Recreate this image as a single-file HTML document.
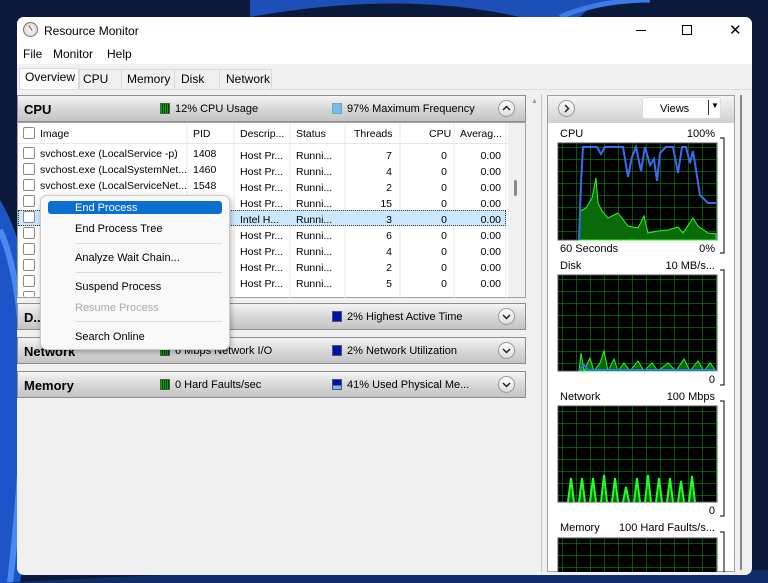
<!DOCTYPE html><html><head><style>
*{margin:0;padding:0;box-sizing:border-box}
body{width:768px;height:583px;overflow:hidden;position:relative;font-family:"Liberation Sans",sans-serif;font-size:11px;color:#000;background:#0b1a3a}
.a{position:absolute;white-space:nowrap}
.t{font-size:10.5px}
.win{left:17px;top:17px;width:735px;height:558px;background:#f0f0f0;border-radius:7px;overflow:hidden}
.hdr{position:absolute;left:17px;width:509px;height:27px;background:linear-gradient(#f4f4f4,#d8d8d8 50%,#c4c4c4);border:1px solid #8e8e8e}
.hdr b{position:absolute;left:6px;top:6px;font-size:13px}
.circ{position:absolute;width:17px;height:17px;border-radius:50%;border:1px solid #999;background:linear-gradient(#fff,#ddd)}
.sq{display:inline-block;width:10px;height:11px;vertical-align:-2px;margin-right:5px;border:1px solid #555}
.g{background:repeating-linear-gradient(90deg,#0a0 0 1px,#040 1px 2px)}
.bl{background:#0010b0}
.cb{position:absolute;left:23px;width:12px;height:12px;border:1px solid #888;border-radius:2px;background:#fff}
.row{position:absolute;left:18px;width:488px;height:16px}
.r{text-align:right}
.mi{position:absolute;left:75px}
.sep{position:absolute;left:76px;width:146px;height:1px;background:#ddd}
</style></head><body>
<svg class="a" style="left:0;top:0" width="768" height="583"><path d="M0 200 Q60 300 20 583 L0 583Z" fill="#1d55c9"/><path d="M0 230 Q40 320 10 583" stroke="#4a8af0" stroke-width="6" fill="none"/><path d="M250 17 Q400 -10 520 17 L580 17 Q600 -5 640 0 L250 0Z" fill="#1c4fb8"/><path d="M560 17 Q600 0 650 0" stroke="#3c7ce8" stroke-width="5" fill="none"/><path d="M0 583 L768 583 L768 570 Q400 560 0 583Z" fill="#102d6a"/></svg>
<div class="a win">
<div class="a" style="left:0;top:0;width:735px;height:46px;background:#fff"></div>
</div>
<div class="a" style="left:23px;top:22px;width:15px;height:15px;border-radius:50%;border:1px solid #777;background:radial-gradient(#fff,#ccc)"></div>
<div class="a" style="left:30px;top:25px;width:1px;height:6px;background:#c33;transform:rotate(-35deg)"></div>
<div class="a" style="left:44px;top:24px;font-size:12px">Resource Monitor</div>
<div class="a" style="left:636px;top:30px;width:10px;height:1px;background:#000"></div>
<div class="a" style="left:682px;top:25px;width:10px;height:10px;border:1px solid #000"></div>
<div class="a" style="left:729px;top:21px;font-size:15px">✕</div>
<div class="a" style="left:23px;top:47px;font-size:12px">File</div>
<div class="a" style="left:53px;top:47px;font-size:12px">Monitor</div>
<div class="a" style="left:107px;top:47px;font-size:12px">Help</div>
<div class="a" style="left:17px;top:63px;width:735px;height:1px;background:#fff"></div>
<div class="a" style="left:19px;top:68px;width:60px;height:21px;background:#fbfbfb;border:1px solid #d9d9d9;border-bottom:none"></div>
<div class="a" style="left:79px;top:69px;width:193px;height:20px;border:1px solid #d9d9d9;border-bottom:none"></div>
<div class="a" style="left:121px;top:69px;width:1px;height:20px;background:#d9d9d9"></div>
<div class="a" style="left:174px;top:69px;width:1px;height:20px;background:#d9d9d9"></div>
<div class="a" style="left:219px;top:69px;width:1px;height:20px;background:#d9d9d9"></div>
<div class="a" style="left:25px;top:70px;font-size:12px">Overview</div>
<div class="a" style="left:83px;top:72px;font-size:12px">CPU</div>
<div class="a" style="left:127px;top:72px;font-size:12px">Memory</div>
<div class="a" style="left:181px;top:72px;font-size:12px">Disk</div>
<div class="a" style="left:226px;top:72px;font-size:12px">Network</div>
<div class="a" style="left:17px;top:89px;width:735px;height:1px;background:#ddd"></div>
<!-- CPU section -->
<div class="hdr" style="top:95px"><b>CPU</b><span class="a" style="left:142px;top:7px"><i class="sq g"></i>12% CPU Usage</span><span class="a" style="left:314px;top:7px"><i class="sq" style="background:#7ab8f0;border-color:#6aa"></i>97% Maximum Frequency</span><div class="circ" style="left:480px;top:4px"><svg width="15" height="15"><path d="M4 9L7.5 5.5L11 9" stroke="#222" stroke-width="1.5" fill="none"/></svg></div></div>
<div class="a" style="left:17px;top:122px;width:509px;height:176px;background:#fff;border:1px solid #a0a0a0"></div>
<div class="a" style="left:18px;top:123px;width:490px;height:21px;border-bottom:1px solid #e5e5e5"></div>
<div class="cb" style="top:127px"></div>
<div class="a t" style="left:40px;top:128px">Image</div>
<div class="a t" style="left:193px;top:128px">PID</div>
<div class="a t" style="left:240px;top:128px">Descrip...</div>
<div class="a t" style="left:296px;top:128px">Status</div>
<div class="a t" style="left:354px;top:128px">Threads</div>
<div class="a t" style="left:429px;top:128px">CPU</div>
<div class="a t" style="left:460px;top:128px">Averag...</div>
<svg class="a" style="left:18px;top:123px" width="490" height="175"><g stroke="#e8e8e8"><path d="M169 0V175M216 0V175M272 0V175M327 0V175M382 0V175M436 0V175M488 0V175"/></g></svg>
<div class="a" style="left:508px;top:123px;width:17px;height:174px;background:#f0f0f0"></div>
<div class="a" style="left:514px;top:180px;width:3px;height:16px;background:#888;border-radius:2px"></div>
<div class="row" style="top:210px;background:#cce8ff;border:1px dotted #333"></div>
<div class="cb" style="top:147px"></div><div class="a t" style="left:40px;top:148px">svchost.exe (LocalService -p)</div><div class="a t" style="left:193px;top:148px">1408</div>
<div class="cb" style="top:163px"></div><div class="a t" style="left:40px;top:164px">svchost.exe (LocalSystemNet...</div><div class="a t" style="left:193px;top:164px">1460</div>
<div class="cb" style="top:179px"></div><div class="a t" style="left:40px;top:180px">svchost.exe (LocalServiceNet...</div><div class="a t" style="left:193px;top:180px">1548</div>
<div class="cb" style="top:195px"></div><div class="cb" style="top:211px"></div><div class="cb" style="top:227px"></div><div class="cb" style="top:243px"></div><div class="cb" style="top:259px"></div><div class="cb" style="top:275px"></div><div class="cb" style="top:291px;height:6px;border-bottom:none"></div>
<div class="a t" style="left:240px;top:148px;line-height:16px">Host Pr...<br>Host Pr...<br>Host Pr...<br>Host Pr...<br>Intel H...<br>Host Pr...<br>Host Pr...<br>Host Pr...<br>Host Pr...</div>
<div class="a t" style="left:296px;top:148px;line-height:16px">Runni...<br>Runni...<br>Runni...<br>Runni...<br>Runni...<br>Runni...<br>Runni...<br>Runni...<br>Runni...</div>
<div class="a r t" style="left:352px;top:148px;width:40px;line-height:16px">7<br>4<br>2<br>15<br>3<br>6<br>4<br>2<br>5</div>
<div class="a r t" style="left:407px;top:148px;width:40px;line-height:16px">0<br>0<br>0<br>0<br>0<br>0<br>0<br>0<br>0</div>
<div class="a r t" style="left:461px;top:148px;width:40px;line-height:16px">0.00<br>0.00<br>0.00<br>0.00<br>0.00<br>0.00<br>0.00<br>0.00<br>0.00</div>
<!-- other headers -->
<div class="hdr" style="top:303px"><b>D...</b><span class="a" style="left:142px;top:7px"><i class="sq g"></i>Disk I/O</span><span class="a" style="left:314px;top:7px"><i class="sq bl"></i>2% Highest Active Time</span><div class="circ" style="left:480px;top:4px"><svg width="15" height="15"><path d="M4 6L7.5 9.5L11 6" stroke="#222" stroke-width="1.5" fill="none"/></svg></div></div>
<div class="hdr" style="top:337px"><b>Network</b><span class="a" style="left:142px;top:7px"><i class="sq g"></i>6 Mbps Network I/O</span><span class="a" style="left:314px;top:7px"><i class="sq bl"></i>2% Network Utilization</span><div class="circ" style="left:480px;top:4px"><svg width="15" height="15"><path d="M4 6L7.5 9.5L11 6" stroke="#222" stroke-width="1.5" fill="none"/></svg></div></div>
<div class="hdr" style="top:371px"><b>Memory</b><span class="a" style="left:142px;top:7px"><i class="sq g"></i>0 Hard Faults/sec</span><span class="a" style="left:314px;top:7px"><i class="sq" style="background:linear-gradient(#0010b0 60%,#7ab8f0 60%)"></i>41% Used Physical Me...</span><div class="circ" style="left:480px;top:4px"><svg width="15" height="15"><path d="M4 6L7.5 9.5L11 6" stroke="#222" stroke-width="1.5" fill="none"/></svg></div></div>
<!-- context menu -->
<div class="a" style="left:40px;top:195px;width:190px;height:155px;background:#f9f9f9;border:1px solid #ccc;border-radius:7px;box-shadow:1px 2px 6px rgba(0,0,0,.3)"></div>
<div class="a" style="left:48px;top:201px;width:174px;height:13px;background:#0a6fd1;border-radius:3px"></div>
<div class="mi" style="top:202px;color:#fff">End Process</div>
<div class="mi" style="top:223px">End Process Tree</div>
<div class="sep" style="top:243px"></div>
<div class="mi" style="top:252px">Analyze Wait Chain...</div>
<div class="sep" style="top:272px"></div>
<div class="mi" style="top:281px">Suspend Process</div>
<div class="mi" style="top:302px;color:#aaa">Resume Process</div>
<div class="sep" style="top:321px"></div>
<div class="mi" style="top:331px">Search Online</div>
<!-- left scrollbar -->
<div class="a" style="left:541px;top:94px;width:1px;height:478px;background:#c8c8c8"></div>
<div class="a" style="left:531px;top:98px;font-size:7px;color:#999">▲</div>
<!-- right panel -->
<div class="a" style="left:547px;top:95px;width:188px;height:477px;background:#fff;border:1px solid #a0a0a0"></div>
<div class="a" style="left:548px;top:96px;width:186px;height:27px;background:linear-gradient(#f4f4f4,#d0d0d0)"></div>
<div class="circ" style="left:558px;top:100px"><svg width="15" height="15"><path d="M6 4L9.5 7.5L6 11" stroke="#222" stroke-width="1.5" fill="none"/></svg></div>
<div class="a" style="left:642px;top:97px;width:79px;height:22px;background:#fff;border:1px solid #ddd;border-radius:3px;padding:5px 0 0 17px">Views</div>
<div class="a" style="left:708px;top:100px;width:1px;height:15px;background:#333"></div>
<div class="a" style="left:711px;top:101px;font-size:8px">▼</div>
<div class="a" style="left:740px;top:95px;width:2px;height:475px;background:#888"></div>
<svg class="a" style="left:548px;top:123px" width="186" height="449">
<defs><pattern id="gr" width="14" height="12" patternUnits="userSpaceOnUse" x="0" y="0"><rect width="14" height="12" fill="#000"/><path d="M0 0H14M0 0V12" stroke="#0b8a0b" stroke-width="1.2"/></pattern></defs>
<g font-family="Liberation Sans" font-size="11">
<text x="12" y="14">CPU</text><text x="167" y="14" text-anchor="end">100%</text>
<rect x="10" y="20" width="159" height="97" fill="url(#gr)" stroke="#555"/>
<path d="M31 117 L32 88 L38 85 L44 75 L48 55 L50 80 L54 88 L60 95 L70 90 L80 103 L90 105 L96 93 L100 110 L110 108 L120 107 L130 104 L135 110 L145 95 L150 103 L160 110 L168 111 L168 117Z" fill="#0a6a0a" stroke="#2f2" stroke-width="1"/>
<path d="M31 117 L33 60 L35 24 L49 24 L53 31 L57 24 L75 24 L80 54 L84 34 L88 24 L93 48 L97 24 L102 42 L106 36 L109 58 L112 30 L118 24 L125 24 L130 50 L134 24 L138 24 L142 40 L145 28 L152 72 L160 80 L168 80" fill="none" stroke="#3a6cf0" stroke-width="2"/>
<text x="12" y="129">60 Seconds</text><text x="167" y="129" text-anchor="end">0%</text>
<path d="M172 15h4v115h-4" stroke="#000" fill="none"/>
<text x="12" y="146">Disk</text><text x="167" y="146" text-anchor="end">10 MB/s...</text>
<rect x="10" y="152" width="159" height="96" fill="url(#gr)" stroke="#555"/>
<path d="M31 248 L33 230 L36 248 L42 235 L46 248 L52 240 L56 228 L60 248 L66 236 L70 248 L76 240 L82 248 L90 238 L96 248 L104 240 L110 248 L120 240 L128 248 L136 236 L142 248 L150 238 L156 248 L162 240 L168 248Z" fill="#0a6a0a" stroke="#2f2"/>
<path d="M31 247 L36 242 L40 247 L168 247" stroke="#3a6cf0" stroke-width="2" fill="none"/>
<text x="167" y="260" text-anchor="end">0</text>
<path d="M172 147h4v115h-4" stroke="#000" fill="none"/>
<text x="12" y="277">Network</text><text x="167" y="277" text-anchor="end">100 Mbps</text>
<rect x="10" y="283" width="159" height="96" fill="url(#gr)" stroke="#555"/>
<path d="M20 379 L23 355 L26 379 M31 379 L34 355 L37 379 M42 379 L45 355 L48 379 M53 379 L56 352 L59 379 M64 379 L67 355 L70 379 M75 379 L78 364 L81 379 M86 379 L89 355 L92 379 M97 379 L100 352 L103 379 M108 379 L111 355 L114 379 M119 379 L122 355 L125 379 M130 379 L133 358 L136 379 M141 379 L144 353 L147 379" fill="#0a6a0a" stroke="#2f2" stroke-width="2"/>
<text x="167" y="391" text-anchor="end">0</text>
<path d="M172 278h4v115h-4" stroke="#000" fill="none"/>
<text x="12" y="408">Memory</text><text x="167" y="408" text-anchor="end">100 Hard Faults/s...</text>
<path d="M172 409h4v40" stroke="#000" fill="none"/>
<rect x="10" y="415" width="159" height="40" fill="url(#gr)" stroke="#555"/>
</g></svg>
</body></html>
